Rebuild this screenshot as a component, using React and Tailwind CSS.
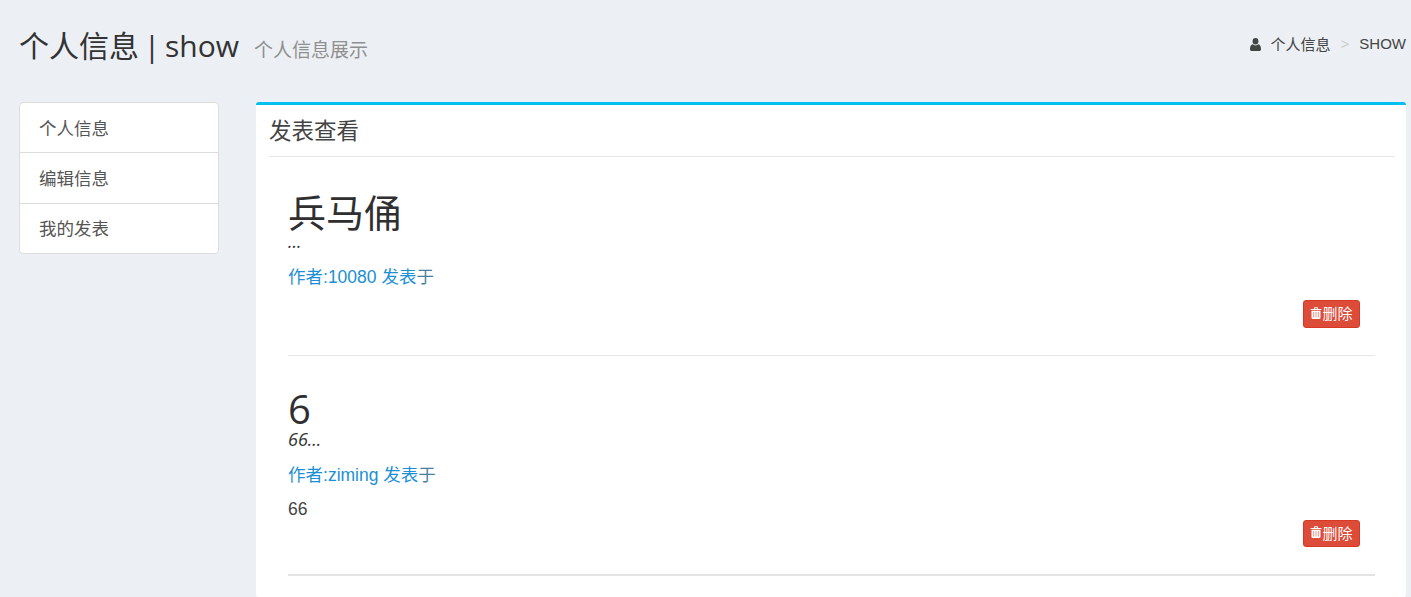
import React from "react";

const sans = "font-['Liberation_Sans','Noto_Sans_CJK_SC',sans-serif]";
const head = "font-['Open_Sans','Noto_Sans_CJK_SC',sans-serif]";
const cjk = "font-['Noto_Sans_CJK_SC',sans-serif]";

function UserIcon() {
  return (
    <svg width="11" height="13" viewBox="0 0 11 13" className="shrink-0">
      <ellipse cx="5.5" cy="3.2" rx="2.9" ry="3.2" fill="#444" />
      <path d="M0 11.2C0 8.4 1 6.8 2.6 6.3c.8.7 1.8 1.1 2.9 1.1s2.1-.4 2.9-1.1C10 6.8 11 8.4 11 11.2c0 1.1-.7 1.8-1.8 1.8H1.8C.7 13 0 12.3 0 11.2z" fill="#444" />
    </svg>
  );
}

function TrashIcon() {
  return (
    <svg width="12" height="12" viewBox="0 0 11 12" className="shrink-0">
      <path d="M3.5 2V1.2C3.5.6 4 .2 4.5.2h2c.5 0 1 .4 1 1V2H10.5c.3 0 .5.2.5.5V3H0v-.5C0 2.200.2 2 .5 2h3zM4.500 2h2v-.8h-2V2z" fill="#fff" />
      <path d="M1 3.800h9v7c0 .7-.5 1.200-1.100 1.200H2.100C1.500 12 1 11.500 1 10.800v-7z" fill="#fff" />
      <path d="M3.200 5v5.500M5.500 5v5.500M7.800 5v5.500" stroke="#dd4b39" strokeWidth=".6" />
    </svg>
  );
}

function DeleteButton({ short }) {
  return (
    <div className="flex justify-end pr-[15px]">
      <button className={`flex ${short ? "h-[27px]" : "h-[28px]"} w-[57px] items-center justify-center rounded-[3px] border border-[#d73925] bg-[#dd4b39] pb-[3px] text-[15px] leading-none text-white ${cjk}`}>
        <TrashIcon />
        <span>删除</span>
      </button>
    </div>
  );
}

function Post({ title, titleClass, excerpt, author, body, hrClass }) {
  return (
    <div>
      <h3 className={`h-[40px] leading-[40px] text-[#2f2f2f] ${titleClass}`}>{title}</h3>
      <div className={`h-[20px] text-[18px] leading-[20px] italic text-[#333] ${head}`}>{excerpt}</div>
      <p className={`mt-[14px] text-[17.500px] leading-[24px] ${sans}`}>
        <span className="text-[#1c8fd6]">作者:{author} 发表</span>
        <span className="text-[#4a7f9e]">于</span>
      </p>
      {body ? (
        <p className={`mt-[10px] h-[24px] text-[17.500px] leading-[24px] text-[#444] ${sans}`}>{body}</p>
      ) : (
        <div className="h-[11px]" />
      )}
      <div className={body ? "mt-[-1px]" : "mt-0"}>
        <DeleteButton short={!!body} />
      </div>
      <hr className={hrClass} />
    </div>
  );
}

export default function App() {
  return (
    <div className={`h-[597px] w-[1411px] overflow-hidden bg-[#ecf0f5] ${sans}`}>
      <header className="flex h-[102px] items-start justify-between pl-[19px] pr-[5px]">
        <div className="mt-[25px] flex items-baseline">
          <h1 className={`text-[30px] leading-[42px] text-[#333] [word-spacing:-3px] ${head}`}>个人信息 | show</h1>
          <span className={`ml-[15px] text-[19px] leading-[42px] text-[#8f8f8f] ${cjk}`}>个人信息展示</span>
        </div>
        <div className="mt-[34px] flex items-center text-[15px] leading-[20px] text-[#444]">
          <UserIcon />
          <span className={`ml-[10px] ${cjk}`}>个人信息</span>
          <span className="mx-[10px] text-[#ccc]">&gt;</span>
          <span>SHOW</span>
        </div>
      </header>

      <div className="flex items-start pl-[19px]">
        <nav className={`w-[200px] overflow-hidden rounded-[4px] border border-[#ddd] bg-white text-[17.500px] leading-[24px] text-[#555] ${cjk}`}>
          <div className="h-[50px] border-b border-[#ddd] pl-[19px] pt-[13px]">个人信息</div>
          <div className="h-[51px] border-b border-[#ddd] pl-[19px] pt-[13px]">编辑信息</div>
          <div className="h-[49px] pl-[19px] pt-[12px]">我的发表</div>
        </nav>

        <main className="ml-[37px] h-[495px] w-[1150px] rounded-[3px] border-t-[3px] border-[#00c0ef] bg-white">
          <div className="pl-[13px] pr-[12px]">
            <div className={`h-[52px] border-b border-[#e5e5e5] pt-[9px] text-[22.500px] leading-[30px] text-[#444] ${cjk}`}>发表查看</div>
          </div>
          <div className="pl-[32px] pr-[31px] pt-[34px]">
            <Post
              title="兵马俑"
              titleClass={`text-[38px] ${cjk}`}
              excerpt="..."
              author="10080"
              hrClass="mt-[27px] mb-[33px] border-t border-[#e5e5e5]"
            />
            <Post
              title="6"
              titleClass={`text-[40px] ${head}`}
              excerpt="66..."
              author="ziming"
              body="66"
              hrClass="mt-[27px] border-t-2 border-[#e3e3e3]"
            />
          </div>
        </main>
      </div>
    </div>
  );
}
